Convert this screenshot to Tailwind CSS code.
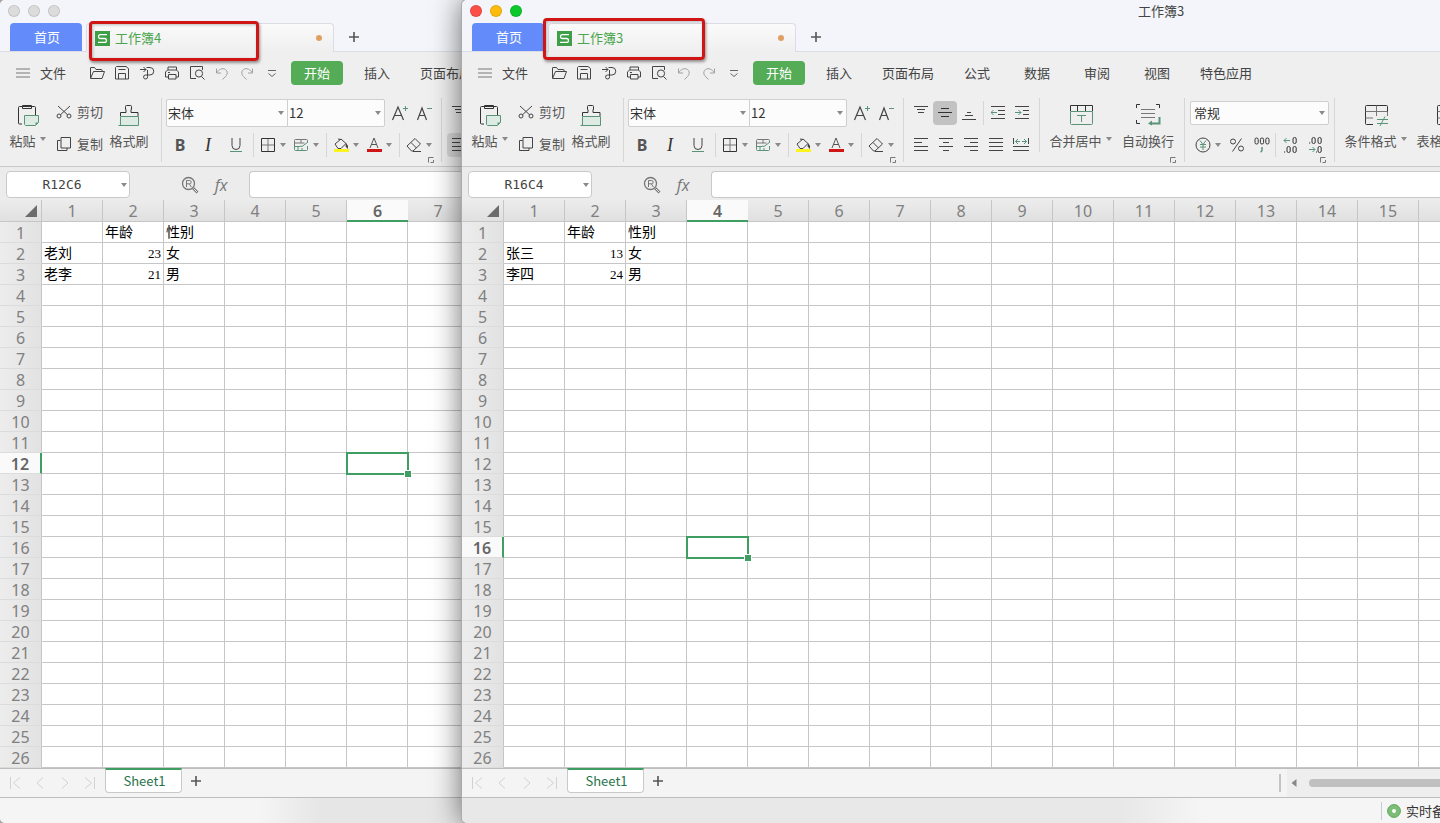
<!DOCTYPE html>
<html lang="zh-CN">
<head>
    <meta charset="UTF-8">
    <meta name="viewport" content="width=device-width, initial-scale=1.0">
    <title>工作簿3</title>
    <script src="https://cdn.jsdelivr.net/npm/@tailwindcss/browser@4"></script>
</head>
<body class="bg-[#a8a0a0] font-['Noto_Sans_CJK_SC',sans-serif] text-[13px] leading-[18px] text-[#444] overflow-hidden">

    <!-- Icons -->
    <svg class="hidden">
        <symbol id="caret" viewBox="0 0 8 6"><path d="M1 1h6L4 5z" fill="#8a8a8a"/></symbol>
        <symbol id="burger" viewBox="0 0 14 10"><path d="M0 1h14M0 5h14M0 9h14" stroke="#a0a0a0" stroke-width="1.600"/></symbol>
        <symbol id="open" viewBox="0 0 16 16"><path d="M1.500 13V3q0-.5.5-.5h3.500l1.500 2h5.500q.5 0 .5.5v1.500M1.500 13.500l3-7h11l-2.500 7z" stroke="#444" stroke-linejoin="round"/></symbol>
        <symbol id="save" viewBox="0 0 16 16"><path d="M2.500 1.500h9.500l2.500 2v10.500h-13v-11.500zM4.500 14V8.500h7V14M4.500 4.500h7" stroke="#444"/></symbol>
        <symbol id="pdf" viewBox="0 0 16 16"><path d="M1 4.500h6M4.500 2L7 4.500 4.500 7M7.500 2.500h3.500a3.700 3.700 0 010 7.500H6.500M8.500 5v6.500a2 2 0 11-2-1.500" stroke="#444"/></symbol>
        <symbol id="print" viewBox="0 0 16 16"><path d="M4 5V2h8.500v3M4 12H1.500V7l2-2h9l2 2v5H12M4.500 9.500h7.500v4.500H4.500zM4 7.500h2" stroke="#444"/></symbol>
        <symbol id="preview" viewBox="0 0 16 16"><path d="M7 13.500H1.500v-12h12V5M12.500 11.500l3 3" stroke="#444"/><circle cx="10" cy="8.500" r="3.600" stroke="#444"/></symbol>
        <symbol id="undo" viewBox="0 0 16 16"><path d="M2.500 3.500v4.500H7M2.500 8c2-3.500 6-5.500 9-3.500 2.500 2 2 5 0 7L8.500 14.500" stroke="#a0a0a0"/></symbol>
        <symbol id="redo" viewBox="0 0 16 16"><path d="M13.500 3.500v4.500H9M13.500 8c-2-3.500-6-5.500-9-3.500-2.500 2-2 5 0 7L7.500 14.500" stroke="#a0a0a0"/></symbol>
        <symbol id="more" viewBox="0 0 16 16"><path d="M4 5.500h8M4.500 8.500L8 11.500l3.500-3" stroke="#666"/></symbol>
        <symbol id="paste" viewBox="0 0 24 24"><path d="M6 21H3.500a1 1 0 01-1-1V4.500a1 1 0 011-1h15a1 1 0 011 1V12M6.500 5.500v-3h9v3z" stroke="#333"/><path d="M8.500 12.500h14v7l-3 3h-10l-1-1z" fill="#deebe4" stroke="#5a9478"/><path d="M19.500 22.500v-3h3z" fill="#5a9478"/></symbol>
        <symbol id="cut" viewBox="0 0 16 16"><path d="M2 2l9.800 9M14 2L4.200 11" stroke="#444"/><circle cx="3" cy="12" r="2" stroke="#444"/><circle cx="13" cy="12" r="2" stroke="#444"/></symbol>
        <symbol id="copy" viewBox="0 0 16 16"><path d="M5 1.500h9.500V12H5zM4.500 4.500h-3v10H11V12" stroke="#444" stroke-linejoin="round"/></symbol>
        <symbol id="brush" viewBox="0 0 24 24"><path d="M3 13.500h18v8.500H2z" fill="#deebe4"/><path d="M3.500 13v-3.500h5.500V7l-.5-1V3.500a1 1 0 011-1h4a1 1 0 011 1V6L14 7v2.500h7V13" stroke="#333"/><path d="M3.500 13.500V22M1.500 22.500h20v-9h-18" stroke="#5a9478"/></symbol>
        <symbol id="grow" viewBox="0 0 18 20"><path d="M1.500 17L7 4l5.500 13M3.500 12.500h7" stroke="#444" stroke-width="1.200"/><path d="M12 5.500h5M14.500 3v5" stroke="#5a9478"/></symbol>
        <symbol id="shrink" viewBox="0 0 18 20"><path d="M1.500 17L6 5l4.500 12M3.500 12.500h5" stroke="#444" stroke-width="1.200"/><path d="M11 5.500h5" stroke="#5a9478"/></symbol>
        <symbol id="under" viewBox="0 0 14 16"><path d="M3 1v7.500a4 4 0 008 0V1" stroke="#444"/><path d="M1 14.500h12" stroke="#5a9478"/></symbol>
        <symbol id="borders" viewBox="0 0 16 16"><path d="M8 1v14M1 8h14" stroke="#777"/><path d="M1.500 1.500h13v13h-13z" stroke="#333" stroke-linejoin="round"/></symbol>
        <symbol id="style" viewBox="0 0 16 16"><path d="M1.500 9V3.500q0-1 1-1h11q1 0 1 1V5M1.500 6h10M8 2.500V6" stroke="#777"/><path d="M1.500 9v3.500q0 1 1 1h11q1 0 1-1V9M1.500 9.500H7M15 5l-6 4.500-2-.5M5 9.500v4M9 11v2.500" stroke="#5a9478"/></symbol>
        <symbol id="fill" viewBox="0 0 16 16"><path d="M2 7l6-5 5 4.500-5 5H5zM5 2l3 .5M13 6.500q2 2 1.500 5" stroke="#444"/><path d="M13 6.500q2 1.500 1.500 5l-2-2z" fill="#444"/><path d="M1 12h15v3H1z" fill="#fbf51d"/></symbol>
        <symbol id="color" viewBox="0 0 16 16"><path d="M4 11l4-10 4 10M5.500 7.500h5" stroke="#555"/><path d="M1 12h15v3H1z" fill="#cf1616"/></symbol>
        <symbol id="erase" viewBox="0 0 16 16"><path d="M1 9l8-7.500L14.500 7 7 14H5.500zM5 5.500l5.500 5.500M7 14.500h8" stroke="#444"/></symbol>
        <symbol id="launch" viewBox="0 0 6 6"><path d="M.5 5.500V.5h5M2.500 5.500h3V3" stroke="#777"/></symbol>
        <symbol id="v-top" viewBox="0 0 14 14"><path d="M0 .5h14M3 3.500h8M4 6.500h6" stroke="#444"/></symbol>
        <symbol id="v-mid" viewBox="0 0 14 14"><path d="M3 2.500h8M0 6.500h14M3 10.500h8" stroke="#333"/></symbol>
        <symbol id="v-bot" viewBox="0 0 14 14"><path d="M5 6.500h4M3 9.500h8M0 13.500h14" stroke="#444"/></symbol>
        <symbol id="outdent" viewBox="0 0 14 14"><path d="M0 .5h14M7 4.500h7M7 8.500h7M0 12.500h14" stroke="#444"/><path d="M0 6.500h6M2.500 4L0 6.500 2.500 9" stroke="#5a9478"/></symbol>
        <symbol id="indent" viewBox="0 0 14 14"><path d="M0 .5h14M8 4.500h6M8 8.500h6M0 12.500h14" stroke="#444"/><path d="M0 6.500h6M3.500 4L6 6.500 3.500 9" stroke="#5a9478"/></symbol>
        <symbol id="a-left" viewBox="0 0 14 14"><path d="M0 .5h14M0 4.500h8M0 8.500h14M0 12.500h14" stroke="#444"/></symbol>
        <symbol id="a-center" viewBox="0 0 14 14"><path d="M0 .5h14M4 4.500h6M0 8.500h14M4 12.500h6" stroke="#444"/></symbol>
        <symbol id="a-right" viewBox="0 0 14 14"><path d="M0 .5h14M6 4.500h8M0 8.500h14M6 12.500h8" stroke="#444"/></symbol>
        <symbol id="a-full" viewBox="0 0 14 14"><path d="M0 .5h14M0 4.500h14M0 8.500h14M0 12.500h14" stroke="#444"/></symbol>
        <symbol id="a-spread" viewBox="0 0 16 14"><path d="M.5 0v6M15.500 0v6M0 8.500h16M0 12.500h16" stroke="#444"/><path d="M2.500 3.500H7M5 1L2.500 3.500 5 6M9 3.500h4.500M11 1l2.500 2.500L11 6" stroke="#5a9478"/></symbol>
        <symbol id="merge" viewBox="0 0 24 24"><path d="M1.500 8.500v12q0 1 1 1h20q1 0 1-1v-12zM8 12.500h9M12.500 12.500V19" stroke="#5a9478"/><path d="M1.500 8V2.500h22V8M8.500 2.500V8M16.500 2.500V8" stroke="#333"/></symbol>
        <symbol id="wrap" viewBox="0 0 26 24"><path d="M1.500 5V1.500H5M21 1.500h3.500V5M1.500 17v3.500H5" stroke="#333"/><path d="M6 6.500h14M6 10.500h14M6 14.500h14" stroke="#777"/><path d="M24.500 14v6.500H15" stroke="#5a9478" stroke-width="2"/><path d="M13 20.500l4-3v5z" fill="#5a9478"/></symbol>
        <symbol id="yen" viewBox="0 0 16 16"><circle cx="8" cy="8" r="7" stroke="#444"/><path d="M5 3.500L8 7.500l3-4M8 7.500V13M5 7.500h6M5 10h6" stroke="#5a9478"/></symbol>
        <symbol id="percent" viewBox="0 0 16 16"><circle cx="4" cy="4.500" r="2.500" stroke="#444"/><circle cx="12" cy="11.500" r="2.500" stroke="#444"/><path d="M12.500 1.500l-9 13" stroke="#444"/></symbol>
        <symbol id="thousand" viewBox="0 0 16 16"><rect x="1" y="1" width="3.200" height="6" rx="1.500" stroke="#333"/><rect x="6.400" y="1" width="3.200" height="6" rx="1.500" stroke="#333"/><rect x="11.800" y="1" width="3.200" height="6" rx="1.500" stroke="#333"/><path d="M8 10v3q0 1.500-1.500 2" stroke="#5a9478" stroke-width="1.500"/></symbol>
        <symbol id="dec-less" viewBox="0 0 16 18"><path d="M2 4.500h6M4.500 2L2 4.500 4.500 7" stroke="#5a9478"/><rect x="11" y="1.500" width="3.200" height="6" rx="1.500" stroke="#333"/><rect x="5" y="10.500" width="3.200" height="6" rx="1.500" stroke="#333"/><rect x="11" y="10.500" width="3.200" height="6" rx="1.500" stroke="#333"/><path d="M2 16h1.200" stroke="#333" stroke-width="1.200"/></symbol>
        <symbol id="dec-more" viewBox="0 0 16 18"><path d="M2 13.500h6M5.500 11L8 13.500 5.500 16" stroke="#5a9478"/><rect x="11" y="1.500" width="3.200" height="6" rx="1.500" stroke="#333"/><rect x="5" y="1.500" width="3.200" height="6" rx="1.500" stroke="#333"/><rect x="11" y="10.500" width="3.200" height="6" rx="1.500" stroke="#333"/><path d="M2 7h1.200M9 16h1" stroke="#333" stroke-width="1.200"/></symbol>
        <symbol id="cond" viewBox="0 0 24 24"><path d="M1.500 14v6.500q0 1 1 1H9M1.500 15V3.500q0-1 1-1h20q1 0 1 1V9" stroke="#333"/><path d="M1.500 8.500h22M1.500 15H9M12.500 2.500V13M23.500 8.500V13" stroke="#777"/><path d="M13 16.500h11M13 20.500h11M21 13.500l-5 9.500" stroke="#5a9478"/></symbol>
        <symbol id="find" viewBox="0 0 18 18"><circle cx="7.500" cy="7.500" r="6" stroke="#777" stroke-width="1.300"/><path d="M5.500 11V4.500h3a1.600 1.600 0 010 3.300h-3M8.500 8l1.800 3" stroke="#777"/><path d="M12 12l4.500 4.500" stroke="#777" stroke-width="2.600"/><path d="M12.500 12.500l3.500 3.500" stroke="#ececec"/></symbol>
        <symbol id="plus" viewBox="0 0 12 12"><path d="M6 1v10M1 6h10" stroke="#555" stroke-width="1.600"/></symbol>
        <symbol id="first" viewBox="0 0 12 14"><path d="M1.500 1v12M11 1.500L4.500 7l6.500 5.500" stroke="#d2d2d2"/></symbol>
        <symbol id="prev" viewBox="0 0 12 14"><path d="M9 1.500L3 7l6 5.500" stroke="#d2d2d2"/></symbol>
        <symbol id="next" viewBox="0 0 12 14"><path d="M3 1.500L9 7l-6 5.500" stroke="#d2d2d2"/></symbol>
        <symbol id="last" viewBox="0 0 12 14"><path d="M10.500 1v12M1 1.500L7.500 7 1 12.500" stroke="#d2d2d2"/></symbol>
        <symbol id="logo" viewBox="0 0 15 15"><path d="M0 0h15v15H0z" fill="#3f9f46"/><path d="M12 3.700H5.500q-2 0-2 1.900t2 1.900h4q2 0 2 1.900t-2 1.900H3" stroke="#fff" stroke-width="1.300"/></symbol>
        <symbol id="corner" viewBox="0 0 12 12"><path d="M12 0v12H0z" fill="#6c6c6c"/></symbol>
    </svg>

    <main class="flex min-h-screen fill-none"></main>

    <template id="window">
        <section class="relative flex flex-col overflow-hidden rounded-[5px] bg-[#efefef]">
            <!-- Title bar -->
            <header class="relative bg-[#f3f5fa]">
                <div class="flex h-[23px] items-center pb-px pl-2">
                    <div class="lights flex gap-2">
                        <button aria-label="关闭" class="size-3 rounded-full border border-black/10"></button>
                        <button aria-label="最小化" class="size-3 rounded-full border border-black/10"></button>
                        <button aria-label="缩放" class="size-3 rounded-full border border-black/10"></button>
                    </div>
                    <h1 class="title flex-1 pl-[360px] text-center"></h1>
                </div>
                <div class="flex h-[29px] border-b border-[#dcdce6] pl-[10px]">
                    <button class="w-[72px] rounded-t bg-[#638cfa] pl-[2px] text-white">首页</button>
                    <button class="-mb-px ml-1 flex w-[248px] items-center rounded-t border border-b-0 border-[#dcdce6] bg-linear-to-b from-[#fafafa] to-[#efefef] pl-2 pr-[11px] text-[#4aa54e]">
                        <svg class="mr-[5px] size-[15px]"><use href="#logo"/></svg>
                        <span class="name"></span>
                        <i class="ml-auto size-[6px] rounded-full bg-[#dfa062]"></i>
                    </button>
                    <button aria-label="新建" class="ml-[14px]"><svg class="size-3"><use href="#plus"/></svg></button>
                </div>
            </header>

            <!-- Menu -->
            <nav class="flex h-[41px] shrink-0 items-center whitespace-nowrap *:shrink-0">
                <button class="ml-4 flex w-[68px] items-center gap-[10px]"><svg class="h-[10px] w-[14px]"><use href="#burger"/></svg>文件</button>
                <div class="flex w-[203px] gap-[9px] pl-[5px]">
                    <button aria-label="打开"><svg class="size-4"><use href="#open"/></svg></button>
                    <button aria-label="保存"><svg class="size-4"><use href="#save"/></svg></button>
                    <button aria-label="输出为PDF"><svg class="size-4"><use href="#pdf"/></svg></button>
                    <button aria-label="打印"><svg class="size-4"><use href="#print"/></svg></button>
                    <button aria-label="打印预览"><svg class="size-4"><use href="#preview"/></svg></button>
                    <button aria-label="撤销"><svg class="size-4"><use href="#undo"/></svg></button>
                    <button aria-label="恢复"><svg class="size-4"><use href="#redo"/></svg></button>
                    <button aria-label="更多"><svg class="size-4"><use href="#more"/></svg></button>
                </div>
                <button class="mx-1 h-6 w-[52px] rounded bg-[#54ac56] text-white">开始</button>
                <button class="min-w-[60px] px-[13px]">插入</button>
                <button class="min-w-[60px] px-[13px]">页面布局</button>
                <button data-wide class="min-w-[60px] px-[13px]">公式</button>
                <button data-wide class="min-w-[60px] px-[13px]">数据</button>
                <button data-wide class="min-w-[60px] px-[13px]">审阅</button>
                <button data-wide class="min-w-[60px] px-[13px]">视图</button>
                <button data-wide class="min-w-[60px] px-[13px]">特色应用</button>
            </nav>

            <!-- Ribbon -->
            <div class="flex h-[74px] shrink-0 border-b border-[#c9c9c9] whitespace-nowrap text-[#555] *:shrink-0">
                <button class="ml-[9px] flex w-[38px] flex-col items-center gap-[5px] pt-[10px]">
                    <svg class="size-6"><use href="#paste"/></svg>
                    <span class="flex items-center gap-[3px]">粘贴<svg class="mb-1 h-[6px] w-2"><use href="#caret"/></svg></span>
                </button>
                <div class="ml-[9px] flex flex-col gap-2 pt-[7px]">
                    <button class="flex h-6 items-center gap-[5px]"><svg class="size-4"><use href="#cut"/></svg>剪切</button>
                    <button class="flex h-6 items-center gap-[5px]"><svg class="size-4"><use href="#copy"/></svg>复制</button>
                </div>
                <button class="ml-[6px] flex w-10 flex-col items-center gap-[5px] pt-[10px]"><svg class="size-6"><use href="#brush"/></svg>格式刷</button>
                <i class="ml-3 mt-[5px] h-16 w-px bg-[#d6d6d6]"></i>

                <div class="relative ml-1 flex w-[272px] flex-col gap-[6px] pt-[6px]">
                    <div class="flex items-center">
                        <label class="grid w-[122px] items-center">
                            <select aria-label="字体" class="col-start-1 row-start-1 h-7 appearance-none rounded-l-xs border border-[#cfcfcf] bg-[#fcfcfc] pl-px text-[#333]"><option>宋体</option></select>
                            <svg class="col-start-1 row-start-1 mr-[3px] h-[6px] w-2 justify-self-end"><use href="#caret"/></svg>
                        </label>
                        <label class="-ml-px grid w-[98px] items-center">
                            <select aria-label="字号" class="col-start-1 row-start-1 h-7 appearance-none rounded-r-xs border border-[#cfcfcf] bg-[#fcfcfc] pl-px text-[#333]"><option>12</option></select>
                            <svg class="col-start-1 row-start-1 mr-[3px] h-[6px] w-2 justify-self-end"><use href="#caret"/></svg>
                        </label>
                        <button aria-label="增大字号" class="ml-[6px] mr-[7px]"><svg class="h-5 w-[18px]"><use href="#grow"/></svg></button>
                        <button aria-label="减小字号"><svg class="h-5 w-[18px]"><use href="#shrink"/></svg></button>
                    </div>
                    <div class="flex h-6 items-center gap-[6px] pl-[3px]">
                        <button class="w-[22px] font-['Noto_Sans',sans-serif] text-[16px] font-bold">B</button>
                        <button class="w-[22px] font-['Liberation_Serif',serif] text-[18px] italic text-[#333]">I</button>
                        <button aria-label="下划线" class="flex w-[22px] justify-center"><svg class="h-4 w-[14px]"><use href="#under"/></svg></button>
                        <i class="h-6 w-px bg-[#d6d6d6]"></i>
                        <button aria-label="边框" class="flex items-center gap-[3px]"><svg class="size-4"><use href="#borders"/></svg><svg class="h-[6px] w-2"><use href="#caret"/></svg></button>
                        <button aria-label="单元格样式" class="flex items-center gap-[3px]"><svg class="size-4"><use href="#style"/></svg><svg class="h-[6px] w-2"><use href="#caret"/></svg></button>
                        <i class="h-6 w-px bg-[#d6d6d6]"></i>
                        <button aria-label="填充颜色" class="flex items-center gap-[3px]"><svg class="size-4"><use href="#fill"/></svg><svg class="h-[6px] w-2"><use href="#caret"/></svg></button>
                        <button aria-label="字体颜色" class="flex items-center gap-[3px]"><svg class="size-4"><use href="#color"/></svg><svg class="h-[6px] w-2"><use href="#caret"/></svg></button>
                        <i class="h-6 w-px bg-[#d6d6d6]"></i>
                        <button aria-label="清除" class="flex items-center gap-[3px]"><svg class="size-4"><use href="#erase"/></svg><svg class="h-[6px] w-2"><use href="#caret"/></svg></button>
                    </div>
                    <svg class="absolute bottom-[3px] right-1 size-[6px]"><use href="#launch"/></svg>
                </div>
                <i class="ml-[3px] mt-[5px] h-16 w-px bg-[#d6d6d6]"></i>

                <div class="ml-[5px] flex w-[125px] flex-col gap-2 pt-2">
                    <div class="flex h-6 items-center">
                        <button aria-label="顶端对齐" class="flex size-6 items-center justify-center rounded"><svg class="size-[14px]"><use href="#v-top"/></svg></button>
                        <button aria-label="垂直居中" data-on="middle" class="flex size-6 items-center justify-center rounded"><svg class="size-[14px]"><use href="#v-mid"/></svg></button>
                        <button aria-label="底端对齐" class="flex size-6 items-center justify-center rounded"><svg class="size-[14px]"><use href="#v-bot"/></svg></button>
                        <i class="mx-[2px] h-6 w-px bg-[#d6d6d6]"></i>
                        <button aria-label="减少缩进" class="flex size-6 items-center justify-center"><svg class="size-[14px]"><use href="#outdent"/></svg></button>
                        <button aria-label="增加缩进" class="flex size-6 items-center justify-center"><svg class="size-[14px]"><use href="#indent"/></svg></button>
                    </div>
                    <div class="flex h-6 items-center gap-px">
                        <button aria-label="左对齐" data-on="left" class="flex size-6 items-center justify-center rounded"><svg class="size-[14px]"><use href="#a-left"/></svg></button>
                        <button aria-label="水平居中" class="flex size-6 items-center justify-center"><svg class="size-[14px]"><use href="#a-center"/></svg></button>
                        <button aria-label="右对齐" class="flex size-6 items-center justify-center"><svg class="size-[14px]"><use href="#a-right"/></svg></button>
                        <button aria-label="两端对齐" class="flex size-6 items-center justify-center"><svg class="size-[14px]"><use href="#a-full"/></svg></button>
                        <button aria-label="分散对齐" class="flex size-6 items-center justify-center"><svg class="h-[14px] w-4"><use href="#a-spread"/></svg></button>
                    </div>
                </div>
                <i data-wide class="ml-[5px] mt-[5px] h-[54px] w-px bg-[#d6d6d6]"></i>

                <button data-wide class="ml-[7px] flex w-[68px] flex-col items-center gap-[5px] pt-[10px]">
                    <svg class="size-6"><use href="#merge"/></svg>
                    <span class="flex items-center gap-[3px]">合并居中<svg class="mb-1 h-[6px] w-2"><use href="#caret"/></svg></span>
                </button>
                <div data-wide class="relative ml-[3px] flex w-[60px] justify-center">
                    <button class="flex flex-col items-center gap-[5px] pt-[10px]"><svg class="h-6 w-[26px]"><use href="#wrap"/></svg>自动换行</button>
                    <svg class="absolute bottom-[3px] right-[2px] size-[6px]"><use href="#launch"/></svg>
                </div>
                <i data-wide class="ml-[6px] mt-[5px] h-16 w-px bg-[#d6d6d6]"></i>

                <div data-wide class="relative ml-[5px] flex w-[139px] flex-col gap-2 pt-2">
                    <label class="grid items-center">
                        <select aria-label="数字格式" class="col-start-1 row-start-1 h-6 appearance-none rounded-xs border border-[#cfcfcf] bg-[#fcfcfc] pl-[3px] text-[#333]"><option>常规</option></select>
                        <svg class="col-start-1 row-start-1 mr-[3px] h-[6px] w-2 justify-self-end"><use href="#caret"/></svg>
                    </label>
                    <div class="flex h-6 items-center gap-[3px] pl-[5px]">
                        <button aria-label="货币" class="flex items-center gap-[3px]"><svg class="size-4"><use href="#yen"/></svg><svg class="h-[6px] w-2"><use href="#caret"/></svg></button>
                        <button aria-label="百分比" class="flex w-6 justify-center"><svg class="size-4"><use href="#percent"/></svg></button>
                        <button aria-label="千位分隔" class="flex w-5 justify-center"><svg class="size-4"><use href="#thousand"/></svg></button>
                        <i class="h-6 w-px bg-[#d6d6d6]"></i>
                        <button aria-label="减少小数" class="flex w-[22px] justify-center"><svg class="h-[18px] w-4"><use href="#dec-less"/></svg></button>
                        <button aria-label="增加小数" class="flex w-[22px] justify-center"><svg class="h-[18px] w-4"><use href="#dec-more"/></svg></button>
                    </div>
                    <svg class="absolute bottom-[3px] right-[3px] size-[6px]"><use href="#launch"/></svg>
                </div>
                <i data-wide class="ml-[5px] mt-[5px] h-16 w-px bg-[#d6d6d6]"></i>

                <button data-wide class="ml-[7px] flex w-[68px] flex-col items-center gap-[5px] pt-[10px]">
                    <svg class="size-6"><use href="#cond"/></svg>
                    <span class="flex items-center gap-[3px]">条件格式<svg class="mb-1 h-[6px] w-2"><use href="#caret"/></svg></span>
                </button>
                <button data-wide class="ml-1 flex w-[68px] flex-col items-center gap-[5px] pt-[10px]">
                    <svg class="size-6"><use href="#cond"/></svg>
                    <span class="flex items-center gap-[3px]">表格样式<svg class="mb-1 h-[6px] w-2"><use href="#caret"/></svg></span>
                </button>
            </div>

            <!-- Formula bar -->
            <div class="flex h-[33px] shrink-0 items-center bg-[#ececec] pl-[6px] pt-[2px]">
                <label class="grid w-[124px] shrink-0 items-center">
                    <input aria-label="名称框" class="ref col-start-1 row-start-1 h-[27px] w-full rounded border border-[#c9c9c9] bg-white pr-3 text-center font-['DejaVu_Sans_Mono',monospace] text-[13px]">
                    <svg class="col-start-1 row-start-1 mr-[2px] h-[6px] w-2 justify-self-end"><use href="#caret"/></svg>
                </label>
                <button aria-label="查找" class="ml-[51px]"><svg class="size-[18px]"><use href="#find"/></svg></button>
                <button class="ml-3 w-5 shrink-0 font-['Open_Sans',sans-serif] text-[16px] italic text-[#777]">fx</button>
                <input aria-label="编辑栏" class="ml-[18px] h-[27px] min-w-0 flex-1 rounded-l border border-r-0 border-[#c9c9c9] bg-white">
            </div>

            <!-- Grid -->
            <div class="flex-1 overflow-hidden bg-white">
                <table class="w-px table-fixed border-separate border-spacing-0">
                    <thead class="font-['Noto_Sans',sans-serif] text-[16px] leading-[18px] text-[#808080]"><tr></tr></thead>
                    <tbody></tbody>
                </table>
            </div>

            <!-- Sheet tabs -->
            <div class="flex h-[30px] shrink-0 border-b border-[#bdbdbd] border-t border-t-[#bdbdbd] bg-[#f4f4f4]">
                <div class="flex items-center gap-[13px] pl-[9px]">
                    <button aria-label="第一张"><svg class="h-[14px] w-3"><use href="#first"/></svg></button>
                    <button aria-label="上一张"><svg class="h-[14px] w-3"><use href="#prev"/></svg></button>
                    <button aria-label="下一张"><svg class="h-[14px] w-3"><use href="#next"/></svg></button>
                    <button aria-label="最后一张"><svg class="h-[14px] w-3"><use href="#last"/></svg></button>
                </div>
                <button class="-mt-px ml-[9px] h-[25px] w-[77px] shrink-0 rounded-b border border-t-2 border-[#c9c9c9] border-t-[#3f9f62] bg-white pl-[2px] text-[13px] text-[#26744a]">Sheet1</button>
                <button aria-label="新建工作表" class="ml-2 mb-[5px]"><svg class="size-3"><use href="#plus"/></svg></button>
                <div data-wide class="ml-auto flex w-[161px] shrink-0 items-center">
                    <i class="h-[18px] w-[2px] bg-[#c4c4c4]"></i>
                    <div class="ml-[6px] flex h-full flex-1 items-center bg-[#eee] pl-1">
                        <svg class="h-2 w-[6px]" viewBox="0 0 6 8"><path d="M5.500 0v8L.5 4z" fill="#888"/></svg>
                        <i class="ml-3 h-2 flex-1 rounded-l-full bg-[#c0c0c0]"></i>
                    </div>
                </div>
            </div>

            <!-- Status bar -->
            <footer class="flex h-[25px] shrink-0 items-center">
                <div data-wide class="ml-auto flex w-[59px] items-center overflow-hidden whitespace-nowrap border-l border-[#c9c9d6] pl-[5px] text-[#333]">
                    <svg class="mr-[5px] size-[14px] shrink-0" viewBox="0 0 14 14"><circle cx="7" cy="7" r="4.200" fill="#fff" stroke="#7dbd78" stroke-width="4.500"/><circle cx="7" cy="7" r="6.400" fill="none" stroke="#5fa75c"/></svg>
                    实时备份
                </div>
            </footer>
            <div class="mark pointer-events-none absolute rounded-[4px] border-[3px] border-[#d01515] shadow-[1px_2px_3px_rgba(0,0,0,0.4),inset_1px_1px_3px_rgba(0,0,0,0.25)]"></div>
        </section>
    </template>

    <script>
        const books = [
            {
                name: "工作簿4", active: false, row: 12, col: 6, cols: 7,
                on: "left", onColor: "bg-[#d6d6d6]",
                box: "w-[468px] shrink-0",
                mark: "left-[89px] top-[21px] h-[40px] w-[170px]",
                footer: "bg-linear-to-r from-[#f5f5f5] from-[260px] to-[#e6e6e6] to-[320px]",
                data: [["", "年龄", "性别"], ["老刘", 23, "女"], ["老李", 21, "男"]]
            },
            {
                name: "工作簿3", active: true, row: 16, col: 4, cols: 16,
                on: "middle", onColor: "bg-[#c2c2c2]",
                box: "z-10 -ml-[6px] min-w-0 flex-1 rounded-r-none shadow-[0_0_0_1px_#aaa,0_0_30px_rgba(0,0,0,0.6)]",
                mark: "left-[81px] top-[18px] h-[42px] w-[162px]",
                footer: "bg-linear-to-r from-[#e8e8e8] from-[660px] to-[#f5f5f5] to-[740px]",
                data: [["", "年龄", "性别"], ["张三", 13, "女"], ["李四", 24, "男"]]
            }
        ];
        const lights = ["bg-[#fc4f48]", "bg-[#fdbc0b]", "bg-[#0bc92b]"];
        const ROWS = 26;

        function headRow(book) {
            let html = `<th class="h-[22px] w-[42px] border-r border-b border-[#c6c6c6] bg-linear-to-b from-[#ececec] to-[#e0e0e0] p-0"><svg class="ml-auto mr-1 size-3"><use href="#corner"/></svg></th>`;
            for (let c = 1; c <= book.cols; c++) {
                html += c === book.col
                    ? `<th class="h-[22px] w-[61px] border-b-2 border-[#3f9f62] bg-[#fafafa] p-0 pt-px font-semibold text-[#666]">${c}</th>`
                    : `<th class="h-[22px] w-[61px] border-r border-b border-[#c6c6c6] bg-linear-to-b from-[#ececec] to-[#e0e0e0] p-0 pt-px font-normal">${c}</th>`;
            }
            return html;
        }

        function bodyRow(book, r) {
            let html = r === book.row
                ? `<th class="h-[21px] border-r-2 border-b border-r-[#3f9f62] border-b-[#dcdcdc] bg-[#fafafa] p-0 pt-px font-['Noto_Sans',sans-serif] text-[16px] leading-[18px] font-semibold text-[#666]">${r}</th>`
                : `<th class="h-[21px] border-r border-b border-r-[#c6c6c6] border-b-[#dcdcdc] bg-linear-to-r from-[#ededed] to-[#e2e2e2] p-0 pt-px font-['Noto_Sans',sans-serif] text-[16px] leading-[18px] font-normal text-[#808080]">${r}</th>`;
            for (let c = 1; c <= book.cols; c++) {
                const value = (book.data[r - 1] || [])[c - 1] ?? "";
                const align = typeof value === "number" ? "text-right text-[13px]" : "text-left text-[14px]";
                let inner = value;
                if (r === book.row && c === book.col) {
                    // selection frame with its fill handle
                    inner = `<div class="absolute -top-px -left-px -right-[2px] -bottom-[2px] z-10 border-2 border-[#3f9f62]"><i class="absolute -right-[5px] -bottom-[5px] size-2 border border-white bg-[#3f9f62]"></i></div>`;
                }
                html += `<td class="relative h-[21px] border-r border-b border-[#c6c6c6] px-[2px] pt-[2px] pb-0 font-['Liberation_Serif','Noto_Sans_CJK_SC',serif] leading-[18px] text-black ${align}">${inner}</td>`;
            }
            return html;
        }

        for (const book of books) {
            const win = document.getElementById("window").content.cloneNode(true).firstElementChild;
            win.classList.add(...book.box.split(" "));
            win.querySelector(".mark").classList.add(...book.mark.split(" "));
            win.querySelector("footer").classList.add(...book.footer.split(" "));
            win.querySelector(".name").textContent = book.name;
            win.querySelector(".ref").setAttribute("value", `R${book.row}C${book.col}`);
            win.querySelector(`[data-on="${book.on}"]`).classList.add(book.onColor);
            win.querySelectorAll(".lights button").forEach((b, i) => b.classList.add(book.active ? lights[i] : "bg-[#dcdcdc]"));
            if (book.active) {
                win.querySelector(".title").textContent = book.name;
            } else {
                win.querySelectorAll("[data-wide]").forEach(el => el.remove());
            }
            win.querySelector("thead tr").innerHTML = headRow(book);
            let rows = "";
            for (let r = 1; r <= ROWS; r++) rows += `<tr>${bodyRow(book, r)}</tr>`;
            win.querySelector("tbody").innerHTML = rows;
            document.querySelector("main").append(win);
        }
    </script>
</body>
</html>
